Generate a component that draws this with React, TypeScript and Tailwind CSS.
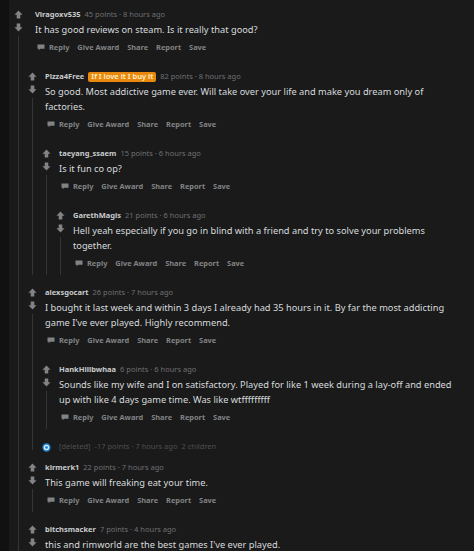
import React from "react";

type Comment = {
  user: string;
  points: string;
  time: string;
  body: string;
  flair?: string;
  replies?: Comment[];
  collapsed?: { points: string; time: string; children: string };
};

const thread: Comment = {
  user: "Viragoxv535",
  points: "45 points",
  time: "8 hours ago",
  body: "It has good reviews on steam. Is it really that good?",
  replies: [
    {
      user: "Pizza4Free",
      flair: "If I love it I buy it",
      points: "82 points",
      time: "8 hours ago",
      body: "So good. Most addictive game ever. Will take over your life and make you dream only of factories.",
      replies: [
        {
          user: "taeyang_ssaem",
          points: "15 points",
          time: "6 hours ago",
          body: "Is it fun co op?",
          replies: [
            {
              user: "GarethMagis",
              points: "21 points",
              time: "6 hours ago",
              body: "Hell yeah especially if you go in blind with a friend and try to solve your problems together.",
            },
          ],
        },
      ],
    },
    {
      user: "alexsgocart",
      points: "26 points",
      time: "7 hours ago",
      body: "I bought it last week and within 3 days I already had 35 hours in it. By far the most addicting game I've ever played. Highly recommend.",
      replies: [
        {
          user: "HankHillbwhaa",
          points: "6 points",
          time: "6 hours ago",
          body: "Sounds like my wife and I on satisfactory. Played for like 1 week during a lay-off and ended up with like 4 days game time. Was like wtfffffffff",
        },
      ],
      collapsed: { points: "-17 points", time: "7 hours ago", children: "2 children" },
    },
    {
      user: "kirmerk1",
      points: "22 points",
      time: "7 hours ago",
      body: "This game will freaking eat your time.",
    },
    {
      user: "bitchsmacker",
      points: "7 points",
      time: "4 hours ago",
      body: "this and rimworld are the best games I've ever played.",
    },
  ],
};

const Arrow = ({ down }: { down?: boolean }) => (
  <svg
    width="9"
    height="9"
    viewBox="0 0 20 20"
    className={down ? "rotate-180" : ""}
  >
    <polygon points="10,1 19,10.5 14,10.5 14,19 6,19 6,10.5 1,10.5" fill="#818384" />
  </svg>
);

const Bubble = () => (
  <svg width="8" height="7" viewBox="0 0 20 18">
    <path d="M1 1h18v11H8l-4 4v-4H1z" fill="#818384" />
  </svg>
);

const CommentItem = ({ c, depth }: { c: Comment; depth: number }) => (
  <div className="flex">
    <div className="flex w-[14px] shrink-0 flex-col items-center pt-[2px]">
      <Arrow />
      <div className="mt-[4px]">
        <Arrow down />
      </div>
      <div className="mt-[4px] mb-[11px] w-px flex-1 bg-[#343536]" />
    </div>
    <div className="min-w-0 flex-1">
      <div className={depth === 0 ? "pl-[10px]" : "pl-[6px]"}>
        <div className="flex h-[14px] items-center gap-[4px] text-[7.5px] whitespace-nowrap">
          <span className="font-bold text-[#c9cbcd]">{c.user}</span>
          {c.flair && (
            <span className="flex h-[10px] items-center rounded-[2px] bg-[#e8890e] px-[3px] font-semibold text-[#fff1cc]">
              {c.flair}
            </span>
          )}
          <span className="text-[#6f7072]">
            {c.points} · {c.time}
          </span>
        </div>
        <p className="text-[9.25px] leading-[15px] text-[#d7dadc]">{c.body}</p>
        <div className="flex h-[22px] items-center gap-[8px] pl-[2px] text-[7.4px] font-bold text-[#818384]">
          <span className="flex items-center gap-[4px]">
            <Bubble />
            Reply
          </span>
          <span>Give Award</span>
          <span>Share</span>
          <span>Report</span>
          <span>Save</span>
        </div>
      </div>
      <div className="h-[11px]" />
      {c.replies?.map((r) => (
        <CommentItem key={r.user} c={r} depth={depth + 1} />
      ))}
      {c.collapsed && (
        <div className="mb-[7px] flex h-[14px] items-center">
          <div className="flex w-[14px] shrink-0 justify-center">
            <svg width="9" height="9" viewBox="0 0 10 10">
              <circle cx="5" cy="5" r="4.6" fill="#1f86d8" />
              <circle cx="5" cy="5" r="3" fill="#e6eef6" />
              <circle cx="5" cy="5" r="1.6" fill="#1f86d8" />
            </svg>
          </div>
          <div className="flex gap-[4px] pl-[6px] text-[7.5px] whitespace-nowrap text-[#4e4f50]">
            <span>[deleted]</span>
            <span>
              {c.collapsed.points} · {c.collapsed.time}
            </span>
            <span>{c.collapsed.children}</span>
          </div>
        </div>
      )}
    </div>
  </div>
);

export default function App() {
  return (
    <div
      className="flex h-[551px] w-[474px] overflow-hidden bg-[#1a1a1b]"
      style={{ fontFamily: '"Noto Sans", "Open Sans", sans-serif' }}
    >
      <div className="w-[9px] shrink-0 bg-[#111112]" />
      <div className="min-w-0 flex-1 pt-[8px] pr-[16px] pl-[2px]">
        <CommentItem c={thread} depth={0} />
      </div>
    </div>
  );
}
